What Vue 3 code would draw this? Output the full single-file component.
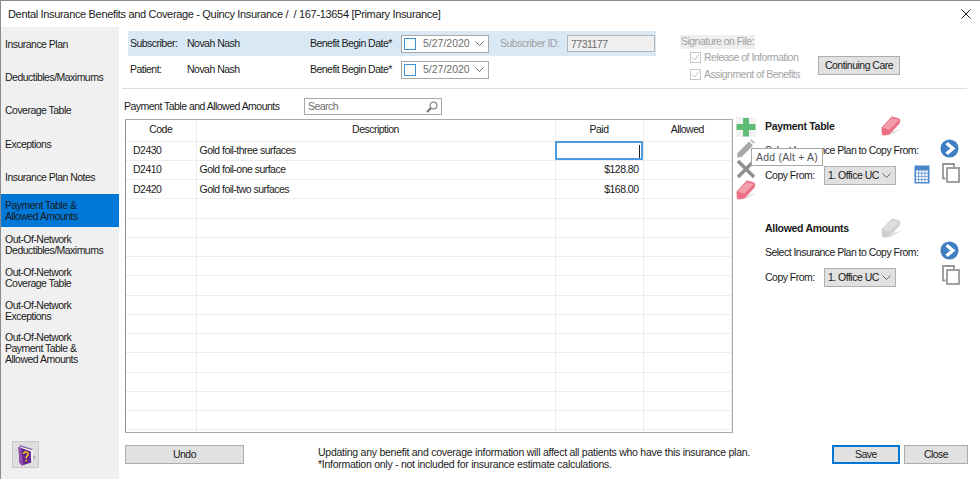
<template>
  <div class="dialog">
    <svg class="sprite" aria-hidden="true">
      <symbol id="eraser" viewBox="0 0 20 20">
        <path d="M5 20 L11 18.5 L20 13 L11 15 Z" fill="#e2e2e2" />
        <path d="M0.5 11.5 L10 1.2 Q11 0.3 12.5 0.8 L18 2.6 Q19.6 3.2 19.2 5 L18.6 7.6 L9 17.8 Q8.4 18.6 7 18.8 L3 19.4 Q1 19.6 0.8 17.5 Z" fill="currentColor" />
        <path d="M1.6 11.4 L10.6 2 L18 4 L8.2 13.8 Z" fill="#fff" opacity="0.32" />
      </symbol>
      <symbol id="go" viewBox="0 0 20 20">
        <circle cx="10" cy="10" r="9.5" fill="#3f7fc1" />
        <path d="M7 4.5 L13.5 10 L7 15.5" fill="none" stroke="#fff" stroke-width="3.6" />
      </symbol>
      <symbol id="copy" viewBox="0 0 18 20">
        <path d="M3.5 15.5 H1 V1 H12 V4" fill="none" stroke="#979797" stroke-width="1.8" />
        <rect x="5" y="5" width="12" height="14" fill="#fff" stroke="#979797" stroke-width="1.8" />
      </symbol>
    </svg>

    <header class="title-bar">
      <span>{{ title }}</span>
      <svg class="close-x" viewBox="0 0 10 10"><path d="M0.5 0.5 L9.5 9.5 M9.5 0.5 L0.5 9.5" stroke="#222" stroke-width="1" /></svg>
    </header>

    <div class="body">
      <nav class="sidebar">
        <a
          v-for="item in navItems"
          :key="item.label"
          class="nav-item"
          :class="{ 'nav-item--active': item.active, 'nav-item--tall': item.tall }"
        >{{ item.label }}</a>
        <button type="button" class="help-btn" aria-label="Help">
          <svg viewBox="0 0 20 22" width="20" height="22">
            <path d="M15 10 L20 13 L17 16 L15 16 Z" fill="#b4b4b4" />
            <path d="M4 1 L17 5 V17 L15 18.5 V7.5 L3 3 Z" fill="#f4f2f6" />
            <path d="M4 1 L17 5 L15.5 6 L3 2.2 Z" fill="#8c6aa6" />
            <path d="M2.5 3 L14.8 7.4 L15.2 18.4 L6 21.6 L3.4 18.6 Z" fill="#64268c" />
            <path d="M2.5 3 L5.4 4 L7.4 21 L6 21.6 L3.4 18.6 Z" fill="#8f4bb0" />
            <path d="M7.6 10 Q8 7.4 10.4 8 Q12.8 8.8 11.8 11.2 L10.2 13 V14.6 M10.2 16 V17.6" fill="none" stroke="#f2c21d" stroke-width="1.6" />
          </svg>
        </button>
      </nav>

      <main class="content">
        <section class="top">
          <div class="people">
            <div class="person person--subscriber">
              <span class="person-role">Subscriber:</span>
              <span class="person-name">Novah Nash</span>
              <span class="date-label">Benefit Begin Date*</span>
              <div class="date-box">
                <span class="date-check"></span>
                <span class="date-value">5/27/2020</span>
                <svg class="chevron" viewBox="0 0 9 5"><path d="M0.5 0.5 L4.5 4.5 L8.5 0.5" /></svg>
              </div>
              <span class="sub-id-label">Subscriber ID:</span>
              <input class="sub-id" type="text" value="7731177" disabled />
            </div>
            <div class="person">
              <span class="person-role">Patient:</span>
              <span class="person-name">Novah Nash</span>
              <span class="date-label">Benefit Begin Date*</span>
              <div class="date-box">
                <span class="date-check"></span>
                <span class="date-value">5/27/2020</span>
                <svg class="chevron" viewBox="0 0 9 5"><path d="M0.5 0.5 L4.5 4.5 L8.5 0.5" /></svg>
              </div>
            </div>
          </div>

          <div class="signature">
            <span class="signature-title">Signature on File:</span>
            <label class="sig-check"><span class="tick"><svg viewBox="0 0 11 11"><path d="M1.5 5.5 L4.5 8.5 L9.5 2" /></svg></span>Release of Information</label>
            <label class="sig-check"><span class="tick"><svg viewBox="0 0 11 11"><path d="M1.5 5.5 L4.5 8.5 L9.5 2" /></svg></span>Assignment of Benefits</label>
          </div>
          <button type="button" class="btn btn--care">Continuing Care</button>
        </section>

        <hr class="rule" />

        <section class="work">
          <div class="table-col">
            <div class="table-head">
              <span class="table-title">Payment Table and Allowed Amounts</span>
              <div class="search">
                <span>Search</span>
                <svg viewBox="0 0 12 12" width="12" height="12">
                  <circle cx="7.5" cy="4.5" r="3.4" fill="none" stroke="#8a8a8a" stroke-width="1.3" />
                  <path d="M5 7 L1 11" stroke="#707070" stroke-width="2" />
                </svg>
              </div>
            </div>
            <div class="grid-wrap">
              <table class="grid">
                <colgroup>
                  <col class="col-code" />
                  <col class="col-desc" />
                  <col class="col-paid" />
                  <col />
                </colgroup>
                <thead>
                  <tr><th>Code</th><th>Description</th><th>Paid</th><th>Allowed</th></tr>
                </thead>
                <tbody>
                  <tr v-for="(row, i) in rows" :key="i">
                    <td>{{ row.code }}</td>
                    <td>{{ row.desc }}</td>
                    <td class="num" :class="{ 'cell-edit': i === 0 }">
                      <span v-if="i === 0" class="caret"></span>{{ row.paid }}
                    </td>
                    <td></td>
                  </tr>
                </tbody>
              </table>
            </div>
          </div>

          <div class="tools">
            <svg class="tool tool--add" viewBox="0 0 20 20">
              <path d="M7 1 H13 V7 H19.5 V13 H13 V19.5 H7 V13 H0.5 V7 H7 Z" fill="#5ebc75" />
            </svg>
            <svg class="tool" viewBox="0 0 20 20">
              <path d="M1.5 15 L13 3.5 L17 7.5 L5.5 19 L1 19.5 Z" fill="#a9a9a9" />
              <path d="M14 2.5 L15.5 1 L19 4.5 L17.5 6 Z" fill="#c4c4c4" />
            </svg>
            <svg class="tool" viewBox="0 0 20 20">
              <path d="M2 2 L18 18 M18 2 L2 18" stroke="#8e8e8e" stroke-width="3.4" />
            </svg>
            <svg class="tool tool--eraser" viewBox="0 0 20 20"><use href="#eraser" /></svg>
            <div class="tooltip">Add (Alt + A)</div>
          </div>

          <div class="copy-panels">
            <div v-for="panel in panels" :key="panel.title" class="copy-panel" :class="panel.cls">
              <div class="copy-title">
                <strong>{{ panel.title }}</strong>
                <svg class="panel-eraser" viewBox="0 0 20 20"><use href="#eraser" /></svg>
              </div>
              <div class="copy-select">
                <span class="copy-select-text">Select Insurance Plan to Copy From:</span>
                <svg class="go" viewBox="0 0 20 20"><use href="#go" /></svg>
              </div>
              <div class="copy-from">
                <span class="copy-label">Copy From:</span>
                <div class="combo">
                  <span>1. Office UC</span>
                  <svg class="chevron" viewBox="0 0 9 5"><path d="M0.5 0.5 L4.5 4.5 L8.5 0.5" /></svg>
                </div>
                <svg v-if="panel.calc" class="calc" viewBox="0 0 16 19">
                  <rect x="0.5" y="0.5" width="15" height="18" fill="#4a86c8" />
                  <g fill="#fff">
                    <rect v-for="c in calcKeys" :key="c.k" :x="c.x" :y="c.y" width="2.4" height="2.4" />
                  </g>
                </svg>
                <svg class="copy" viewBox="0 0 18 20"><use href="#copy" /></svg>
              </div>
            </div>
          </div>
        </section>

        <footer class="foot">
          <button type="button" class="btn btn--undo">Undo</button>
          <p class="note">
            Updating any benefit and coverage information will affect all patients who have this insurance plan.<br />
            *Information only - not included for insurance estimate calculations.
          </p>
          <button type="button" class="btn btn--save">Save</button>
          <button type="button" class="btn btn--close">Close</button>
        </footer>
      </main>
    </div>
  </div>
</template>

<script setup>
const title = 'Dental Insurance Benefits and Coverage - Quincy Insurance /  / 167-13654 [Primary Insurance]'

const navItems = [
  { label: 'Insurance Plan' },
  { label: 'Deductibles/Maximums' },
  { label: 'Coverage Table' },
  { label: 'Exceptions' },
  { label: 'Insurance Plan Notes' },
  { label: 'Payment Table &\nAllowed Amounts', active: true },
  { label: 'Out-Of-Network\nDeductibles/Maximums' },
  { label: 'Out-Of-Network\nCoverage Table' },
  { label: 'Out-Of-Network\nExceptions' },
  { label: 'Out-Of-Network\nPayment Table &\nAllowed Amounts', tall: true }
]

const filled = [
  { code: 'D2430', desc: 'Gold foil-three surfaces', paid: '' },
  { code: 'D2410', desc: 'Gold foil-one surface', paid: '$128.80' },
  { code: 'D2420', desc: 'Gold foil-two surfaces', paid: '$168.00' }
]
const rows = [...filled, ...Array.from({ length: 13 }, () => ({ code: '', desc: '', paid: '' }))]

const panels = [
  { title: 'Payment Table', cls: 'copy-panel--pay', calc: true },
  { title: 'Allowed Amounts', cls: 'copy-panel--allowed', calc: false }
]

const calcKeys = []
for (let r = 0; r < 4; r++) {
  for (let c = 0; c < 4; c++) {
    calcKeys.push({ k: `${r}-${c}`, x: 2 + c * 3.1, y: 5.4 + r * 3.1 })
  }
}
</script>

<style>
html,
body {
  margin: 0;
  background: #fff;
}
</style>

<style scoped>
.dialog {
  display: flex;
  flex-direction: column;
  width: 980px;
  height: 479px;
  box-sizing: border-box;
  border-top: 1px solid #8c8c8c;
  border-left: 1px solid #8c8c8c;
  overflow: hidden;
  background: #fff;
  color: #1a1a1a;
  font-family: "Liberation Sans", Arial, sans-serif;
  font-size: 10.5px;
  line-height: 13px;
  letter-spacing: -0.52px;
  white-space: nowrap;
}

.sprite {
  position: absolute;
  width: 0;
  height: 0;
}

.title-bar {
  display: flex;
  flex: none;
  align-items: center;
  justify-content: space-between;
  height: 26px;
  padding: 0 6px 0 7px;
  font-size: 11px;
  letter-spacing: -0.33px;
  white-space: pre;
}

.close-x {
  width: 10px;
  height: 10px;
  margin-right: 3px;
}

.body {
  display: flex;
  flex: 1;
  min-height: 0;
}

.sidebar {
  display: flex;
  flex: none;
  flex-direction: column;
  width: 118px;
  background: #f0f0f0;
}

.nav-item {
  display: flex;
  flex: none;
  align-items: center;
  box-sizing: border-box;
  height: 33.4px;
  padding: 1px 0 0 4px;
  white-space: pre-line;
  line-height: 11px;
}

.nav-item--active {
  background: #0078d7;
}

.nav-item--tall {
  height: 40px;
}

.help-btn {
  display: flex;
  align-items: center;
  justify-content: center;
  width: 27px;
  height: 27px;
  margin: auto 0 11px 11px;
  padding: 0;
  border: 1px solid #c9c9c9;
  background: #dedede;
}

.content {
  display: flex;
  flex: 1;
  flex-direction: column;
  min-width: 0;
}

.top {
  display: flex;
  align-items: flex-start;
  height: 61px;
  padding: 4px 0 0 9px;
  box-sizing: border-box;
}

.people {
  display: flex;
  flex: none;
  flex-direction: column;
  gap: 1px;
  width: 528px;
}

.person {
  display: flex;
  align-items: center;
  height: 25px;
}

.person--subscriber {
  background: #d9e8f5;
}

.person-role {
  flex: none;
  width: 59px;
  padding-left: 2px;
  box-sizing: border-box;
}

.person-name {
  flex: none;
  width: 123px;
}

.date-label {
  flex: none;
  width: 91px;
}

.date-box {
  display: flex;
  flex: none;
  align-items: center;
  box-sizing: border-box;
  width: 88px;
  height: 18px;
  border: 1px solid #a8a8a8;
  background: #fff;
}

.date-check {
  flex: none;
  box-sizing: border-box;
  width: 12px;
  height: 12px;
  margin-left: 2px;
  border: 1px solid #3c8fd4;
}

.date-value {
  margin-left: 7px;
  color: #6e6e6e;
  letter-spacing: 0;
}

.chevron {
  width: 9px;
  height: 5px;
  margin-left: auto;
  margin-right: 4px;
  fill: none;
  stroke: #666;
  stroke-width: 1;
}

.sub-id-label {
  flex: none;
  width: 67px;
  margin-left: 11px;
  color: #a0a0a0;
}

.sub-id {
  box-sizing: border-box;
  width: 88px;
  height: 17px;
  padding: 0 3px;
  border: 1px solid #b4b4b4;
  background: #efefef;
  color: #6e6e6e;
  font: inherit;
  letter-spacing: inherit;
}

.signature {
  display: flex;
  flex: none;
  flex-direction: column;
  align-items: flex-start;
  width: 138px;
  margin-left: 24px;
  padding-top: 4px;
  color: #a3a3a3;
}

.signature-title {
  height: 14px;
  padding: 0 1px;
  background: #efefef;
}

.sig-check {
  display: flex;
  align-items: center;
  gap: 3px;
  height: 17px;
  margin-left: 10px;
}

.tick {
  display: inline-flex;
  box-sizing: border-box;
  width: 11px;
  height: 11px;
  border: 1px solid #c6c6c6;
}

.tick svg {
  width: 9px;
  height: 9px;
  fill: none;
  stroke: #b0b0b0;
  stroke-width: 1;
}

.btn {
  box-sizing: border-box;
  height: 19px;
  padding: 0;
  border: 1px solid #adadad;
  background: #e1e1e1;
  color: #1a1a1a;
  font: inherit;
  letter-spacing: inherit;
}

.btn--care {
  width: 82px;
  margin: 25px 0 0 0;
}

.rule {
  flex: none;
  width: 845px;
  height: 1px;
  margin: 0 0 0 3px;
  border: 0;
  background: #dcdcdc;
}

.work {
  display: flex;
  flex: none;
  height: 344px;
}

.table-col {
  flex: none;
  width: 608px;
  margin-left: 6px;
}

.table-head {
  display: flex;
  align-items: center;
  height: 17px;
  margin-top: 9px;
}

.table-title {
  width: 180px;
  margin-left: -1px;
}

.search {
  display: flex;
  align-items: center;
  justify-content: space-between;
  box-sizing: border-box;
  width: 138px;
  height: 17px;
  padding: 0 3px;
  border: 1px solid #a8a8a8;
  color: #6b6b6b;
}

.grid-wrap {
  box-sizing: border-box;
  height: 314px;
  margin-top: 4px;
  overflow: hidden;
  border: 1px solid #a9a9a9;
  border-left-color: #8f8f8f;
}

.grid {
  width: 100%;
  border-collapse: collapse;
  table-layout: fixed;
}

.col-code {
  width: 70px;
}

.col-desc {
  width: 359px;
}

.col-paid {
  width: 88px;
}

.grid th {
  height: 21px;
  padding: 0 0 2px;
  box-sizing: border-box;
  border-right: 1px solid #ececec;
  border-bottom: 1px solid #ececec;
  font-weight: 400;
}

.grid td {
  position: relative;
  box-sizing: border-box;
  height: 19.25px;
  padding: 0 3px 0 3px;
  border-right: 1px solid #ececec;
  border-bottom: 1px solid #ececec;
}

.grid td:first-child {
  padding-left: 7px;
}

.grid .num {
  padding-right: 4px;
  text-align: right;
}

.grid .cell-edit {
  outline: 2px solid #4a9be0;
  outline-offset: -2px;
}

.caret {
  position: absolute;
  top: 3px;
  right: 3px;
  width: 1px;
  height: 13px;
  background: #222;
}

.tools {
  position: relative;
  display: flex;
  flex: none;
  flex-direction: column;
  gap: 1px;
  width: 29px;
  margin: 28px 0 0 3px;
}

.tool {
  flex: none;
  width: 20px;
  height: 20px;
}

.tool--add {
  background: #f2f2f2;
}

.tool--eraser {
  color: #ec6f84;
}

.tooltip {
  position: absolute;
  top: 31px;
  left: 15px;
  box-sizing: border-box;
  width: 72px;
  height: 18px;
  border: 1px solid #a6a6a6;
  background: #fff;
  color: #555;
  letter-spacing: 0.2px;
  text-align: center;
  line-height: 16px;
}

.copy-panels {
  flex: 1;
  margin-top: 27px;
}

.copy-panel {
  width: 194px;
}

.copy-panel--pay {
  --eraser: #ec6f84;
  height: 102px;
}

.copy-panel--allowed {
  --eraser: #cfcfcf;
}

.copy-title {
  display: flex;
  align-items: center;
  justify-content: space-between;
  width: 136px;
  height: 20px;
}

.copy-title strong {
  font-weight: 700;
  letter-spacing: -0.3px;
}

.panel-eraser {
  width: 20px;
  height: 20px;
  color: var(--eraser);
}

.copy-select {
  display: flex;
  align-items: center;
  justify-content: space-between;
  height: 20px;
  margin-top: 3px;
}

.copy-select-text {
  padding-top: 2px;
}

.go {
  width: 19px;
  height: 19px;
  margin-top: -2px;
}

.copy-from {
  display: flex;
  align-items: center;
  height: 20px;
  margin-top: 6px;
}

.copy-label {
  flex: none;
  width: 59px;
}

.combo {
  display: flex;
  flex: none;
  align-items: center;
  box-sizing: border-box;
  width: 72px;
  height: 19px;
  padding-left: 3px;
  border: 1px solid #b0b0b0;
  background: #e1e1e1;
}

.calc {
  width: 16px;
  height: 19px;
  margin-left: 18px;
  margin-top: -2px;
}

.copy {
  flex: none;
  width: 18px;
  height: 20px;
  margin-top: -4px;
  margin-left: auto;
  margin-right: -1px;
}

.foot {
  display: flex;
  flex: none;
  align-items: flex-start;
  padding: 12px 0 0 6px;
}

.btn--undo {
  flex: none;
  width: 119px;
}

.note {
  flex: none;
  width: 514px;
  margin: 0 0 0 74px;
  padding-top: 1px;
  line-height: 12px;
  letter-spacing: -0.26px;
}

.btn--save {
  flex: none;
  width: 68px;
  border: 2px solid #0078d7;
}

.btn--close {
  flex: none;
  width: 64px;
  margin-left: 4px;
}
</style>
